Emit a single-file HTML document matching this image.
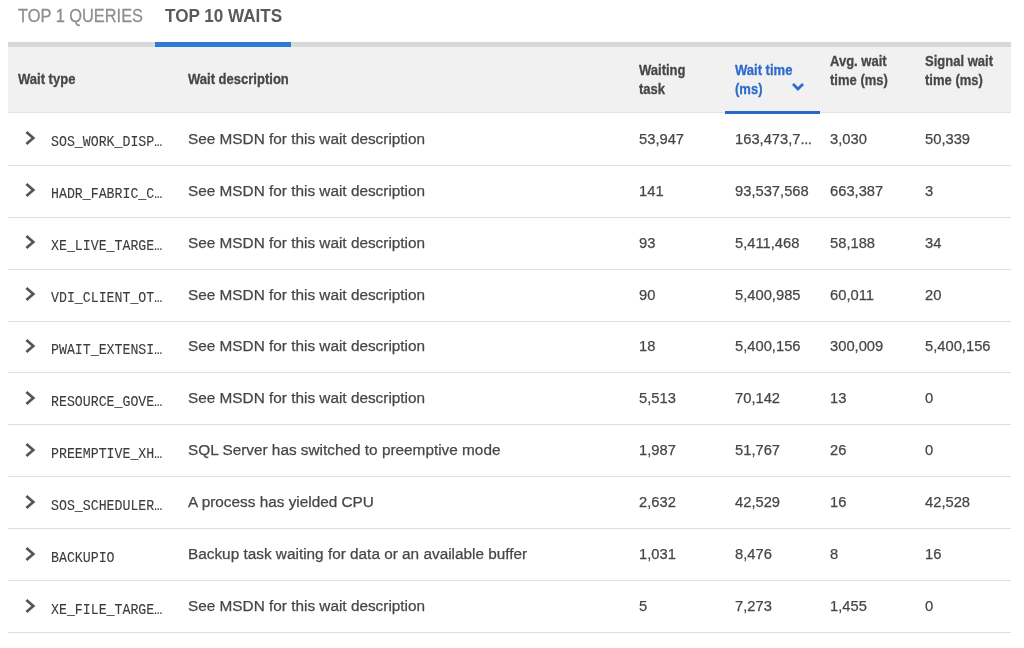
<!DOCTYPE html>
<html><head><meta charset="utf-8">
<style>
html,body{margin:0;padding:0;background:#fff;width:1024px;height:648px;overflow:hidden;position:relative;font-family:"Liberation Sans",sans-serif;}
.tab{position:absolute;top:4px;font-size:19px;line-height:24px;white-space:nowrap;transform-origin:0 0;}
.t1{left:18px;color:#8e8e8e;-webkit-text-stroke:0.3px #8e8e8e;transform:scaleX(0.862);}
.t2{left:165px;color:#5a5a5a;font-weight:bold;transform:scaleX(0.9);}
.bandgray{position:absolute;left:8px;top:42px;width:1003px;height:5px;background:#d8d8d8;}
.bandblue{position:absolute;left:155px;top:42px;width:136px;height:5px;background:#2f7ad6;}
.head{position:absolute;left:8px;top:47px;width:1003px;height:65px;background:#f1f1f1;}
.hline{position:absolute;left:8px;top:112px;width:1003px;height:1px;background:#e3e3e3;}
.h{position:absolute;font-size:15.5px;font-weight:bold;line-height:19px;color:#474747;-webkit-text-stroke:0.3px currentColor;white-space:nowrap;transform-origin:0 0;transform:scaleX(0.84);}
.sortbar{position:absolute;left:725px;top:111px;width:95px;height:3px;background:#2a67c6;}
.sep{position:absolute;left:8px;width:1003px;height:1px;background:#dedede;}
.row{position:absolute;left:8px;width:1003px;height:52px;}
.row .t{position:absolute;top:16px;line-height:20px;font-size:15.5px;color:#464646;-webkit-text-stroke:0.25px #464646;white-space:nowrap;transform-origin:0 0;transform:scaleX(0.99);}
.ell{letter-spacing:-0.5px;}
.row .n{transform:scaleX(0.95);}
.row .mono{position:absolute;font-family:"Liberation Mono",monospace;font-size:14px;transform-origin:0 0;transform:scaleX(0.945);left:43px;top:19px;line-height:20px;color:#3c3c3c;-webkit-text-stroke:0.1px #3c3c3c;white-space:nowrap;}
.chev{position:absolute;left:16px;top:16px;}
.c2{left:180px;}
.c3{left:631px;}
.c4{left:727px;}
.c5{left:822px;}
.c6{left:917px;}
#wrap{position:absolute;left:0;top:0;width:1024px;height:648px;background:#fff;filter:blur(0.35px);}
</style></head><body><div id="wrap">
<div class="tab t1">TOP 1 QUERIES</div>
<div class="tab t2">TOP 10 WAITS</div>
<div class="bandgray"></div>
<div class="bandblue"></div>
<div class="head">
 <div class="h" style="left:10px;top:22px">Wait type</div>
 <div class="h" style="left:180px;top:22px">Wait description</div>
 <div class="h" style="left:631px;top:13px">Waiting<br>task</div>
 <div class="h" style="left:727px;top:13px;color:#2c6acb">Wait time<br>(ms)</div>
 <svg style="position:absolute;left:783px;top:35px" width="14" height="10" viewBox="0 0 14 10"><path d="M2 2 L7 7 L12 2" fill="none" stroke="#2c6acb" stroke-width="2.8"/></svg>
 <div class="h" style="left:822px;top:4px">Avg. wait<br>time (ms)</div>
 <div class="h" style="left:917px;top:4px">Signal wait<br>time (ms)</div>
</div>
<div class="hline"></div>
<div class="sortbar"></div>
<div class="sep" style="top:165px"></div><div class="sep" style="top:217px"></div><div class="sep" style="top:269px"></div><div class="sep" style="top:321px"></div><div class="sep" style="top:372px"></div><div class="sep" style="top:424px"></div><div class="sep" style="top:476px"></div><div class="sep" style="top:528px"></div><div class="sep" style="top:580px"></div><div class="sep" style="top:632px"></div><div class="row" style="top:113px"><svg class="chev" width="14" height="18" viewBox="0 0 14 18"><path d="M2.4 2.9 L9.3 9.0 L2.4 15.1" fill="none" stroke="#555" stroke-width="2.7"/></svg><span class="mono">SOS_WORK_DISP…</span><span class="t c2" style="top:16px">See MSDN for this wait description</span><span class="t n c3" style="top:16px">53,947</span><span class="t n c4" style="top:16px">163,473,7<span class=ell>...</span></span><span class="t n c5" style="top:16px">3,030</span><span class="t n c6" style="top:16px">50,339</span></div><div class="row" style="top:165px"><svg class="chev" width="14" height="18" viewBox="0 0 14 18"><path d="M2.4 2.9 L9.3 9.0 L2.4 15.1" fill="none" stroke="#555" stroke-width="2.7"/></svg><span class="mono">HADR_FABRIC_C…</span><span class="t c2" style="top:16px">See MSDN for this wait description</span><span class="t n c3" style="top:16px">141</span><span class="t n c4" style="top:16px">93,537,568</span><span class="t n c5" style="top:16px">663,387</span><span class="t n c6" style="top:16px">3</span></div><div class="row" style="top:217px"><svg class="chev" width="14" height="18" viewBox="0 0 14 18"><path d="M2.4 2.9 L9.3 9.0 L2.4 15.1" fill="none" stroke="#555" stroke-width="2.7"/></svg><span class="mono">XE_LIVE_TARGE…</span><span class="t c2" style="top:16px">See MSDN for this wait description</span><span class="t n c3" style="top:16px">93</span><span class="t n c4" style="top:16px">5,411,468</span><span class="t n c5" style="top:16px">58,188</span><span class="t n c6" style="top:16px">34</span></div><div class="row" style="top:269px"><svg class="chev" width="14" height="18" viewBox="0 0 14 18"><path d="M2.4 2.9 L9.3 9.0 L2.4 15.1" fill="none" stroke="#555" stroke-width="2.7"/></svg><span class="mono">VDI_CLIENT_OT…</span><span class="t c2" style="top:16px">See MSDN for this wait description</span><span class="t n c3" style="top:16px">90</span><span class="t n c4" style="top:16px">5,400,985</span><span class="t n c5" style="top:16px">60,011</span><span class="t n c6" style="top:16px">20</span></div><div class="row" style="top:321px"><svg class="chev" width="14" height="18" viewBox="0 0 14 18"><path d="M2.4 2.9 L9.3 9.0 L2.4 15.1" fill="none" stroke="#555" stroke-width="2.7"/></svg><span class="mono">PWAIT_EXTENSI…</span><span class="t c2" style="top:15px">See MSDN for this wait description</span><span class="t n c3" style="top:15px">18</span><span class="t n c4" style="top:15px">5,400,156</span><span class="t n c5" style="top:15px">300,009</span><span class="t n c6" style="top:15px">5,400,156</span></div><div class="row" style="top:373px"><svg class="chev" width="14" height="18" viewBox="0 0 14 18"><path d="M2.4 2.9 L9.3 9.0 L2.4 15.1" fill="none" stroke="#555" stroke-width="2.7"/></svg><span class="mono">RESOURCE_GOVE…</span><span class="t c2" style="top:15px">See MSDN for this wait description</span><span class="t n c3" style="top:15px">5,513</span><span class="t n c4" style="top:15px">70,142</span><span class="t n c5" style="top:15px">13</span><span class="t n c6" style="top:15px">0</span></div><div class="row" style="top:425px"><svg class="chev" width="14" height="18" viewBox="0 0 14 18"><path d="M2.4 2.9 L9.3 9.0 L2.4 15.1" fill="none" stroke="#555" stroke-width="2.7"/></svg><span class="mono">PREEMPTIVE_XH…</span><span class="t c2" style="top:15px">SQL Server has switched to preemptive mode</span><span class="t n c3" style="top:15px">1,987</span><span class="t n c4" style="top:15px">51,767</span><span class="t n c5" style="top:15px">26</span><span class="t n c6" style="top:15px">0</span></div><div class="row" style="top:477px"><svg class="chev" width="14" height="18" viewBox="0 0 14 18"><path d="M2.4 2.9 L9.3 9.0 L2.4 15.1" fill="none" stroke="#555" stroke-width="2.7"/></svg><span class="mono">SOS_SCHEDULER…</span><span class="t c2" style="top:15px">A process has yielded CPU</span><span class="t n c3" style="top:15px">2,632</span><span class="t n c4" style="top:15px">42,529</span><span class="t n c5" style="top:15px">16</span><span class="t n c6" style="top:15px">42,528</span></div><div class="row" style="top:529px"><svg class="chev" width="14" height="18" viewBox="0 0 14 18"><path d="M2.4 2.9 L9.3 9.0 L2.4 15.1" fill="none" stroke="#555" stroke-width="2.7"/></svg><span class="mono">BACKUPIO</span><span class="t c2" style="top:15px">Backup task waiting for data or an available buffer</span><span class="t n c3" style="top:15px">1,031</span><span class="t n c4" style="top:15px">8,476</span><span class="t n c5" style="top:15px">8</span><span class="t n c6" style="top:15px">16</span></div><div class="row" style="top:581px"><svg class="chev" width="14" height="18" viewBox="0 0 14 18"><path d="M2.4 2.9 L9.3 9.0 L2.4 15.1" fill="none" stroke="#555" stroke-width="2.7"/></svg><span class="mono">XE_FILE_TARGE…</span><span class="t c2" style="top:15px">See MSDN for this wait description</span><span class="t n c3" style="top:15px">5</span><span class="t n c4" style="top:15px">7,273</span><span class="t n c5" style="top:15px">1,455</span><span class="t n c6" style="top:15px">0</span></div>
</div></body></html>
